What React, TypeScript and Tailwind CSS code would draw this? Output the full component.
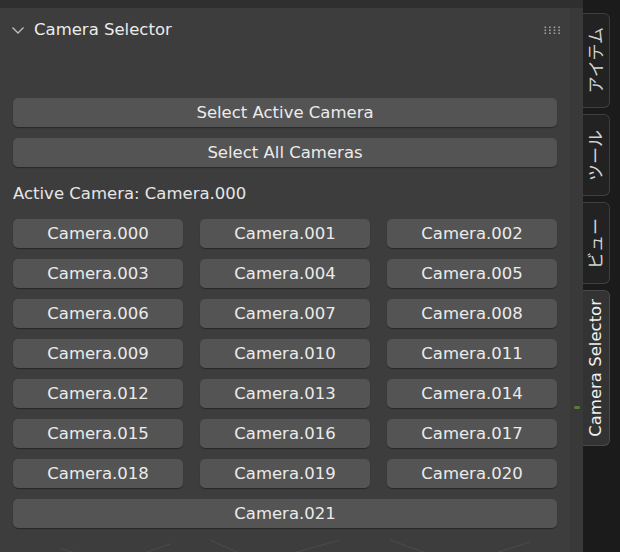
import React from 'react';

const cameras = Array.from({ length: 22 }, (_, i) => `Camera.${String(i).padStart(3, '0')}`);

const font = { fontFamily: '"DejaVu Sans", "Noto Sans CJK JP", sans-serif' };

function Btn({ label, className = '' }: { label: string; className?: string }) {
  return (
    <div
      className={`h-[29px] shrink-0 flex items-center justify-center pt-[2px] rounded-[5px] bg-[#545454] text-[16.5px] text-[#ebebeb] shadow-[0_1px_1px_rgba(0,0,0,0.35)] ${className}`}
    >
      {label}
    </div>
  );
}

function Tab({ label, active, h, jp }: { label: string; active?: boolean; h: string; jp?: boolean }) {
  return (
    <div
      className={`${h} w-[27px] shrink-0 flex items-center justify-center rounded-r-[6px] border border-l-0 ${
        active ? 'bg-[#333333] border-[#4a4a4a] text-[#f0f0f0]' : 'bg-[#222222] border-[#3f3f3f] text-[#d2d2d2]'
      }`}
    >
      <span
        className={`[writing-mode:vertical-rl] [text-orientation:sideways] rotate-180 leading-none ${
          jp ? 'text-[17px]' : 'text-[16.5px]'
        }`}
      >
        {label}
      </span>
    </div>
  );
}

export default function App() {
  return (
    <div className="w-[620px] h-[552px] flex overflow-hidden select-none" style={font}>
      <div className="w-[583px] flex flex-col bg-[#393939]">
        <div className="h-2 shrink-0 bg-[#2f2f2f]" />
        <div className="flex-1 min-h-0 flex">
          <div className="w-[570px] flex flex-col bg-[#3d3d3d] rounded-tr-[4px]">
            {/* header */}
            <div className="h-[42px] shrink-0 flex items-center pt-[2px] pl-[11px] pr-[9px]">
              <svg width="14" height="9" viewBox="0 0 14 9" className="mr-[9px]">
                <polyline points="1.5,1.5 7,7 12.5,1.5" fill="none" stroke="#bdbdbd" strokeWidth="1.4" />
              </svg>
              <span className="text-[16.5px] text-[#ececec]">Camera Selector</span>
              <div className="flex-1" />
              <svg width="17" height="8" viewBox="0 0 17 8">
                {[0, 1, 2].map(r =>
                  [0, 1, 2, 3].map(c => (
                    <rect key={`${r}-${c}`} x={c * 4.6 + 0.5} y={r * 3 + 0.5} width="1.6" height="1.6" fill="#a0a0a0" />
                  ))
                )}
              </svg>
            </div>

            {/* body */}
            <div className="px-[13px] pt-[48px] flex flex-col shrink-0">
              <Btn label="Select Active Camera" />
              <Btn label="Select All Cameras" className="mt-[11px]" />
              <div className="h-[52px] flex items-center pt-[2px] text-[16.5px] text-[#e6e6e6]">
                Active Camera: Camera.000
              </div>
              <div className="grid grid-cols-3 gap-x-[17px] gap-y-[11px]">
                {cameras.map((c, i) => (
                  <Btn key={c} label={c} className={i === 21 ? 'col-span-3' : ''} />
                ))}
              </div>
            </div>

            <div className="flex-1 min-h-0 overflow-hidden">
              <svg width="570" height="30" viewBox="0 0 570 30" className="mt-[6px]">
                <g stroke="#4a4a4a" strokeWidth="1.2" fill="none">
                  <line x1="60" y1="14" x2="90" y2="24" />
                  <line x1="130" y1="24" x2="170" y2="10" />
                  <line x1="210" y1="6" x2="250" y2="24" />
                  <line x1="290" y1="20" x2="340" y2="6" />
                  <line x1="390" y1="6" x2="440" y2="24" />
                  <line x1="480" y1="24" x2="530" y2="8" />
                </g>
              </svg>
            </div>
          </div>
          <div className="flex-1 flex flex-col items-center pt-[398px]">
            <div className="w-[6px] h-[3px] bg-[#5d7a3a] rounded-full" />
          </div>
        </div>
      </div>

      <div className="flex-1 bg-[#1b1b1b] flex flex-col pt-[13px] gap-[6px]">
        <Tab label="アイテム" h="h-[95px]" jp />
        <Tab label="ツール" h="h-[82px]" jp />
        <Tab label="ビュー" h="h-[82px]" jp />
        <Tab label="Camera Selector" h="h-[156px]" active />
      </div>
    </div>
  );
}
